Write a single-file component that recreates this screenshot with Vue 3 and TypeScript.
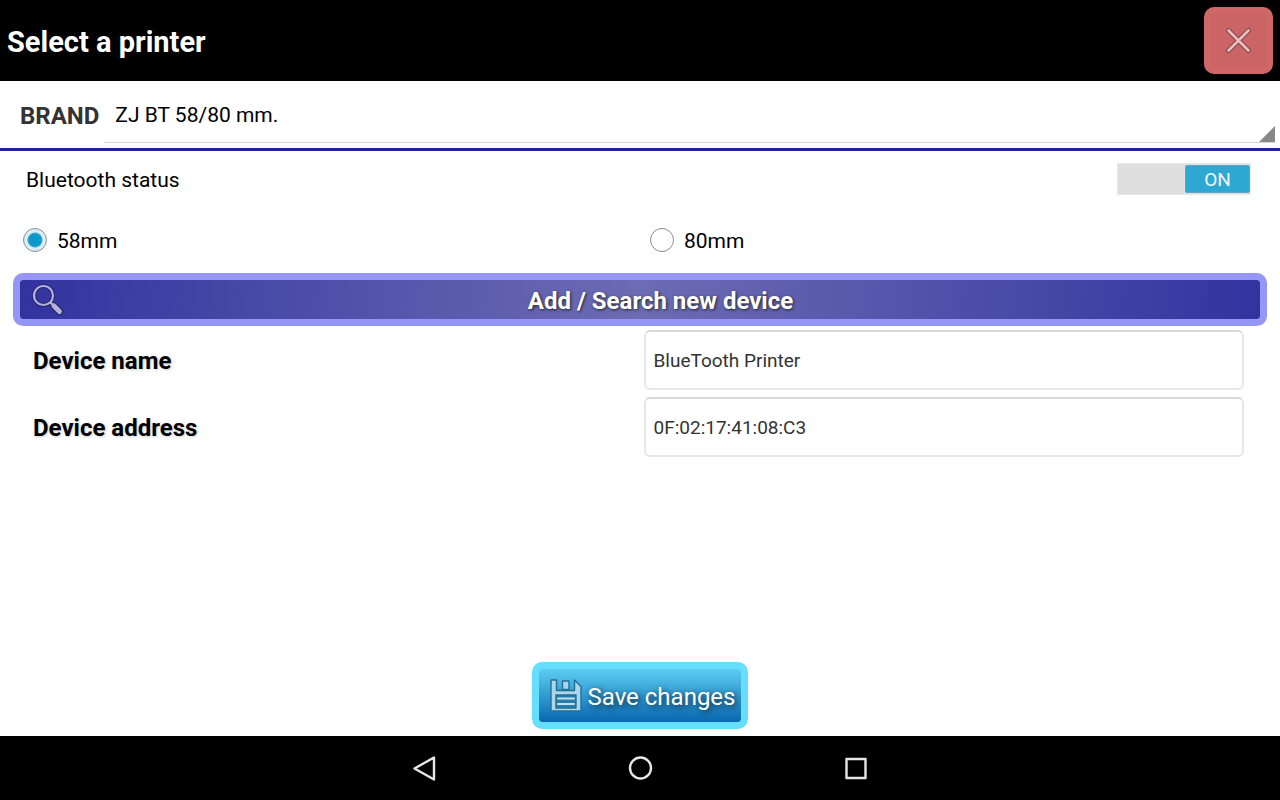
<script setup lang="ts">
import { ref } from 'vue'

const brands: string[] = ['ZJ BT 58/80 mm.']
const brand = ref(brands[0])
const bluetoothOn = ref(true)
const widths: string[] = ['58mm', '80mm']
const paperWidth = ref('58mm')
const deviceName = ref('BlueTooth Printer')
const deviceAddress = ref('0F:02:17:41:08:C3')
</script>

<template>
  <div class="screen">
    <header class="title-bar">
      <h1 class="title">Select a printer</h1>
      <button class="close" type="button" aria-label="Close">
        <svg width="27" height="27" viewBox="0 0 27 27" fill="none" stroke-linecap="round">
          <path d="M3.500 3.500 23.500 23.500M23.500 3.500 3.500 23.500" stroke="#8f484c" stroke-width="5" />
          <path d="M3.500 3.500 23.500 23.500M23.500 3.500 3.500 23.500" stroke="#e9c0c0" stroke-width="2.600" />
        </svg>
      </button>
    </header>

    <div class="brand-row">
      <label class="brand-label" for="brand">BRAND</label>
      <div class="spinner">
        <select id="brand" v-model="brand">
          <option v-for="b in brands" :key="b" :value="b">{{ b }}</option>
        </select>
        <svg class="corner" width="16" height="16" viewBox="0 0 16 16">
          <path d="M16 0V16H0Z" fill="#888" />
        </svg>
      </div>
    </div>

    <main class="content">
      <div class="status-row">
        <label for="bluetooth">Bluetooth status</label>
        <div class="switch" :class="{ on: bluetoothOn }">
          <input id="bluetooth" v-model="bluetoothOn" type="checkbox" role="switch" />
          <span class="thumb">{{ bluetoothOn ? 'ON' : 'OFF' }}</span>
        </div>
      </div>

      <div class="radio-row">
        <label v-for="w in widths" :key="w" class="radio">
          <input v-model="paperWidth" type="radio" name="width" :value="w" />
          <span>{{ w }}</span>
        </label>
      </div>

      <button class="search" type="button">
        <svg width="32" height="32" viewBox="0 0 32 32" fill="none" stroke-linecap="round">
          <circle cx="11.500" cy="11.500" r="9.500" stroke="#25256e" stroke-width="4" />
          <path d="M18.500 18.500 21 21" stroke="#25256e" stroke-width="5" />
          <path d="M22 22 27.500 27.500" stroke="#25256e" stroke-width="7.600" />
          <circle cx="11.500" cy="11.500" r="9.500" stroke="#b4b2dc" stroke-width="2.200" />
          <path d="M18.500 18.500 21 21" stroke="#b4b2dc" stroke-width="2.400" />
          <path d="M22 22 27.500 27.500" stroke="#b4b2dc" stroke-width="5" />
        </svg>
        <span class="search-text">Add / Search new device</span>
      </button>

      <div class="field">
        <label for="device-name">Device name</label>
        <input id="device-name" v-model="deviceName" type="text" />
      </div>
      <div class="field">
        <label for="device-address">Device address</label>
        <input id="device-address" v-model="deviceAddress" type="text" />
      </div>

      <button class="save" type="button">
        <svg width="32" height="33" viewBox="0 0 32 33" stroke="#256f94" stroke-width="1.400" stroke-linejoin="round">
          <path d="M1 1H6.500V11.500H24.500V1L31 7.500V32H1Z" fill="#a9d6ea" />
          <path d="M12.500 2H19V10.500H12.500Z" fill="#a9d6ea" />
          <path d="M6 16H26V29H6Z" fill="#2a7da8" />
          <path d="M8 19.500H24M8 25H24" stroke="#c0e2f0" stroke-width="2" stroke-linecap="round" />
        </svg>
        <span>Save changes</span>
      </button>
    </main>

    <nav class="nav-bar">
      <button type="button" aria-label="Back">
        <svg width="28" height="28" viewBox="0 0 28 28" fill="none" stroke="#e6e6e6" stroke-width="2.400" stroke-linejoin="round">
          <path d="M4.500 14.500 24 3.500V25.500Z" />
        </svg>
      </button>
      <button type="button" aria-label="Home">
        <svg width="28" height="28" viewBox="0 0 28 28" fill="none" stroke="#e6e6e6" stroke-width="2.400">
          <circle cx="14.500" cy="14" r="10.500" />
        </svg>
      </button>
      <button type="button" aria-label="Recent apps">
        <svg width="28" height="28" viewBox="0 0 28 28" fill="none" stroke="#e6e6e6" stroke-width="2.400" stroke-linejoin="round">
          <path d="M4.500 5H23.500V24H4.500Z" />
        </svg>
      </button>
    </nav>
  </div>
</template>

<style>
body {
  margin: 0;
}
</style>

<style scoped>
.screen {
  display: flex;
  flex-direction: column;
  min-height: 100vh;
  background: #fff;
  color: #000;
  font-family: Roboto, sans-serif;
  font-size: 21px;
}

.screen *,
.screen {
  box-sizing: border-box;
}

button,
input,
select {
  margin: 0;
  font: inherit;
}

svg {
  display: block;
  flex: none;
}

.title-bar {
  display: flex;
  align-items: center;
  justify-content: space-between;
  padding: 7px;
  background: #000;
}

.title {
  margin: 0;
  padding-top: 2px;
  color: #fff;
  font-size: 29px;
  font-weight: 700;
  line-height: 34px;
}

.close {
  display: grid;
  place-items: center;
  width: 69px;
  height: 67px;
  padding: 0;
  border: 7px solid #cf6667;
  border-radius: 10px;
  background: #cb6465;
}

.brand-row {
  display: flex;
  align-items: center;
  gap: 5px;
  height: 70px;
  padding: 0 5px 0 20px;
  border-bottom: 3px solid #22229c;
}

.brand-label {
  padding-top: 2px;
  color: #333;
  font-size: 24px;
  font-weight: 700;
}

.spinner {
  position: relative;
  flex: 1;
  height: 57px;
  border-bottom: 1px solid #d4d4d4;
}

.spinner select {
  width: 100%;
  height: 100%;
  padding: 2px 11px 0;
  border: 0;
  outline: 0;
  background: transparent;
  color: #000;
  appearance: none;
}

.corner {
  position: absolute;
  right: 0;
  bottom: 0;
  pointer-events: none;
}

.content {
  display: flex;
  flex: 1;
  flex-direction: column;
  padding: 12px 13px 7px;
}

.status-row {
  display: flex;
  align-items: center;
  justify-content: space-between;
  height: 32px;
  padding: 0 16px 0 13px;
}

.status-row label {
  padding-top: 2px;
}

.switch {
  position: relative;
  display: flex;
  width: 134px;
  height: 32px;
  padding: 1px 0;
  border: 1px solid #e8e8e8;
  background: #dfdfdf;
}

.switch.on {
  justify-content: flex-end;
}

.switch input {
  position: absolute;
  inset: 0;
  width: 100%;
  height: 100%;
  opacity: 0;
}

.thumb {
  display: grid;
  place-items: center;
  width: 65px;
  padding-top: 1px;
  border: 1px solid #5ba9c6;
  border-radius: 2px;
  background: #999;
  color: #f2fafd;
  font-size: 19px;
  line-height: 20px;
}

.switch.on .thumb {
  background: #2fa7d3;
}

.radio-row {
  display: grid;
  grid-template-columns: 1fr 1fr;
  padding: 31px 0 19px;
}

.radio {
  display: flex;
  align-items: center;
  gap: 10px;
  padding-left: 10px;
  line-height: 26px;
}

.radio span {
  padding-top: 2px;
}

.radio input {
  width: 24px;
  height: 24px;
  border: 1px solid #8c8c8c;
  border-radius: 50%;
  background: #fff;
  appearance: none;
}

.radio input:checked {
  background: radial-gradient(circle, #0a9acb 6px, #5fa9c4 7px, #d8eff8 8px);
}

.search {
  display: flex;
  align-items: center;
  min-height: 53px;
  padding: 0 3px 0 12px;
  border: 7px solid #9696f8;
  border-radius: 10px;
  background: linear-gradient(95deg, #3333a0, #6c6cb3 50%, #3333a0) padding-box, #9696f8;
  color: #fff;
  font-size: 24px;
  font-weight: 700;
  line-height: 28px;
}

.search-text {
  flex: 1;
  padding-top: 3px;
  text-align: center;
  text-shadow: 1px 1px 3px #222;
}

.field {
  display: grid;
  grid-template-columns: 61fr 60fr;
  align-items: center;
  margin-top: 4px;
  padding: 0 23px 0 20px;
}

.field + .field {
  margin-top: 7px;
}

.field label {
  padding-top: 2px;
  font-size: 24px;
  font-weight: 700;
  text-shadow: 1px 1px 3px #ccc;
}

.field input {
  width: 100%;
  height: 60px;
  padding: 0 8px;
  border: 2px solid #e8e8e8;
  border-top-color: #d8d8d8;
  border-radius: 6px;
  outline: 0;
  background: #fff;
  color: #333;
  font-size: 19px;
}

.save {
  display: flex;
  align-items: center;
  align-self: center;
  gap: 6px;
  height: 67px;
  margin-top: auto;
  padding: 0 6px 0 11px;
  border: 7px solid #66dfff;
  border-radius: 10px;
  background: linear-gradient(#5ccdf2, #0868b0) padding-box, #66dfff;
  color: #fff;
  font-size: 24px;
  line-height: 28px;
  text-shadow: 2px 2px 6px #123;
}

.save span {
  padding-top: 3px;
}

.nav-bar {
  display: flex;
  align-items: center;
  justify-content: center;
  gap: 160px;
  height: 64px;
  background: #000;
}

.nav-bar button {
  display: grid;
  place-items: center;
  width: 56px;
  height: 56px;
  padding: 0;
  border: 0;
  background: transparent;
}
</style>
